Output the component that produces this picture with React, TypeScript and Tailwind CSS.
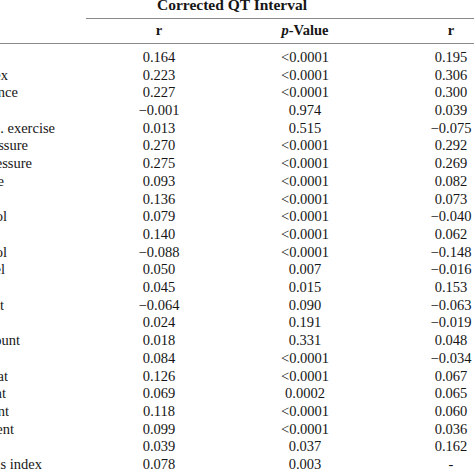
const rows: { label: string; end: string; a: string; p: string; b: string }[] = [
  { label: '', end: 'w-[0px]', a: '0.164', p: '<0.0001', b: '0.195' },
  { label: 'Body mass index', end: 'w-[8px]', a: '0.223', p: '<0.0001', b: '0.306' },
  { label: 'Waist circumference', end: 'w-[18px]', a: '0.227', p: '<0.0001', b: '0.300' },
  { label: '', end: 'w-[0px]', a: '−0.001', p: '0.974', b: '0.039' },
  { label: 'Regular phys. exercise', end: 'w-[55px]', a: '0.013', p: '0.515', b: '−0.075' },
  { label: 'Systolic blood pressure', end: 'w-[28px]', a: '0.270', p: '<0.0001', b: '0.292' },
  { label: 'Diastolic blood pressure', end: 'w-[32px]', a: '0.275', p: '<0.0001', b: '0.269' },
  { label: 'Heart rate', end: 'w-[4px]', a: '0.093', p: '<0.0001', b: '0.082' },
  { label: '', end: 'w-[0px]', a: '0.136', p: '<0.0001', b: '0.073' },
  { label: 'Total cholesterol', end: 'w-[7px]', a: '0.079', p: '<0.0001', b: '−0.040' },
  { label: '', end: 'w-[0px]', a: '0.140', p: '<0.0001', b: '0.062' },
  { label: 'HDL cholesterol', end: 'w-[7px]', a: '−0.088', p: '<0.0001', b: '−0.148' },
  { label: 'Triglyceride level', end: 'w-[5px]', a: '0.050', p: '0.007', b: '−0.016' },
  { label: '', end: 'w-[0px]', a: '0.045', p: '0.015', b: '0.153' },
  { label: 'Hematocrit', end: 'w-[4px]', a: '−0.064', p: '0.090', b: '−0.063' },
  { label: '', end: 'w-[0px]', a: '0.024', p: '0.191', b: '−0.019' },
  { label: 'White blood cell count', end: 'w-[20px]', a: '0.018', p: '0.331', b: '0.048' },
  { label: '', end: 'w-[0px]', a: '0.084', p: '<0.0001', b: '−0.034' },
  { label: 'Body fat', end: 'w-[8px]', a: '0.126', p: '<0.0001', b: '0.067' },
  { label: 'Visceral fat', end: 'w-[6px]', a: '0.069', p: '0.0002', b: '0.065' },
  { label: 'Fat percent', end: 'w-[9px]', a: '0.118', p: '<0.0001', b: '0.060' },
  { label: 'Muscle percent', end: 'w-[14px]', a: '0.099', p: '<0.0001', b: '0.036' },
  { label: '', end: 'w-[0px]', a: '0.039', p: '0.037', b: '0.162' },
  { label: 'Homeostasis index', end: 'w-[42px]', a: '0.078', p: '0.003', b: '-' },
];

export default function App() {
  return (
    <div className="w-[474px] h-[474px] overflow-hidden bg-white text-[#161616] text-[14.5px] leading-[17.7px] font-['Liberation_Serif',serif]">
      <div className="w-[524px] flex flex-col mt-[-4px]">
        {/* spanning header */}
        <div className="grid grid-cols-[86px_438px]">
          <div />
          <div className="border-b border-[#8a8a8a] pb-[3.8px]">
            <div className="w-[292px] text-center font-bold text-[15.5px]">Corrected QT Interval</div>
          </div>
        </div>

        {/* column header */}
        <div className="grid grid-cols-[86px_146px_146px_146px] border-b border-[#8a8a8a] pt-[3.5px] pb-[3.2px] font-bold">
          <div />
          <div className="text-center">r</div>
          <div className="text-center">
            <span className="italic">p</span>-Value
          </div>
          <div className="text-center">r</div>
        </div>

        <div className="flex flex-col pt-[5px]">
          {rows.map((r, i) => (
            <div key={i} className="grid grid-cols-[86px_146px_146px_146px]">
              <div className={`flex justify-end overflow-hidden whitespace-nowrap ${r.end}`}>
                <span className="shrink-0">{r.label}</span>
              </div>
              <div className="text-center">{r.a}</div>
              <div className="text-center">{r.p}</div>
              <div className="text-center">{r.b}</div>
            </div>
          ))}
        </div>
      </div>
    </div>
  );
}
